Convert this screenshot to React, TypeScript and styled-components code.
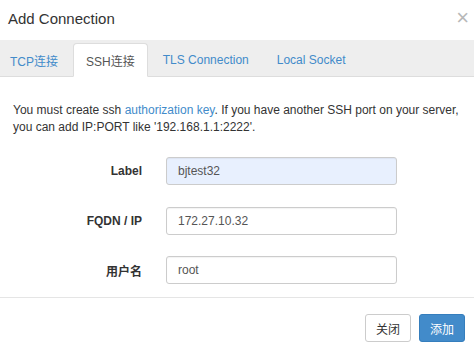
import React from 'react';
import styled, { createGlobalStyle } from 'styled-components';

const GlobalStyle = createGlobalStyle`
  html, body {
    margin: 0;
    padding: 0;
    background: #fff;
  }
  body {
    font-family: "Liberation Sans", Arial, "Noto Sans CJK SC", sans-serif;
    font-size: 12px;
    color: #333;
  }
`;

const Modal = styled.div`
  width: 474px;
  height: 351px;
  display: flex;
  flex-direction: column;
  background: #fff;
  overflow: hidden;
`;

const Header = styled.div`
  height: 40px;
  display: flex;
  align-items: center;
  justify-content: space-between;
  padding: 0 5px 4px 8px;
  box-sizing: border-box;
`;

const Title = styled.h4`
  margin: 0;
  font-size: 15px;
  font-weight: normal;
  color: #333;
`;

const Close = styled.span`
  font-size: 22px;
  font-weight: normal;
  color: #b8b8b8;
  line-height: 1;
`;

const TabBar = styled.ul`
  list-style: none;
  margin: 0;
  padding: 3px 0 0 0;
  height: 37px;
  box-sizing: border-box;
  display: flex;
  background: #eee;
  border-bottom: 1px solid #ddd;
`;

const Tab = styled.li<{ $active?: boolean }>`
  display: flex;
  align-items: center;
  padding: 0 12px;
  margin-right: 2px;
  height: 34px;
  box-sizing: border-box;
  font-size: 12px;
  color: ${p => (p.$active ? '#555' : '#428bca')};
  background: ${p => (p.$active ? '#fff' : 'transparent')};
  border: 1px solid ${p => (p.$active ? '#ddd' : 'transparent')};
  border-bottom-color: transparent;
  border-radius: 4px 4px 0 0;
  margin-bottom: -1px;
  &:first-child {
    padding-left: 10px;
    border-left: none;
  }
`;

const Body = styled.div`
  flex: 1;
  padding: 25px 13px 0 13px;
  border-bottom: 1px solid #e5e5e5;
`;

const Intro = styled.p`
  margin: 0 0 21px 0;
  line-height: 17px;
  font-size: 12px;
  color: #333;
`;

const Link = styled.a`
  color: #428bca;
  text-decoration: none;
`;

const Form = styled.div`
  display: flex;
  flex-direction: column;
  gap: 21.5px;
`;

const Row = styled.div`
  display: flex;
  align-items: center;
`;

const FieldLabel = styled.label`
  width: 129px;
  text-align: right;
  font-weight: bold;
  font-size: 12px;
  color: #333;
  margin-right: 24px;
`;

const Input = styled.input<{ $filled?: boolean }>`
  width: 231px;
  height: 28px;
  box-sizing: border-box;
  padding: 0 11px;
  border: 1px solid #ccc;
  border-radius: 3px;
  font-family: "Liberation Sans", Arial, sans-serif;
  font-size: 12px;
  color: #555;
  background: ${p => (p.$filled ? '#e8f0fe' : '#fff')};
  box-shadow: inset 0 1px 1px rgba(0, 0, 0, 0.05);
  outline: none;
`;

const Footer = styled.div`
  height: 53px;
  display: flex;
  align-items: flex-start;
  justify-content: flex-end;
  gap: 8px;
  padding: 16px 9px 0 0;
  box-sizing: border-box;
`;

const Button = styled.button<{ $primary?: boolean }>`
  height: 28px;
  padding: 0 10px;
  border-radius: 3px;
  font-family: "Liberation Sans", Arial, "Noto Sans CJK SC", sans-serif;
  font-size: 12px;
  border: 1px solid ${p => (p.$primary ? '#357ebd' : '#ccc')};
  background: ${p => (p.$primary ? '#428bca' : '#fff')};
  color: ${p => (p.$primary ? '#fff' : '#333')};
`;

export default function App() {
  return (
    <>
      <GlobalStyle />
      <Modal>
        <Header>
          <Title>Add Connection</Title>
          <Close>×</Close>
        </Header>
        <TabBar>
          <Tab>TCP连接</Tab>
          <Tab $active>SSH连接</Tab>
          <Tab>TLS Connection</Tab>
          <Tab>Local Socket</Tab>
        </TabBar>
        <Body>
          <Intro>
            You must create ssh <Link href="#">authorization key</Link>. If you have another SSH port on your server,
            you can add IP:PORT like '192.168.1.1:2222'.
          </Intro>
          <Form>
            <Row>
              <FieldLabel>Label</FieldLabel>
              <Input $filled defaultValue="bjtest32" />
            </Row>
            <Row>
              <FieldLabel>FQDN / IP</FieldLabel>
              <Input defaultValue="172.27.10.32" />
            </Row>
            <Row>
              <FieldLabel>用户名</FieldLabel>
              <Input defaultValue="root" />
            </Row>
          </Form>
        </Body>
        <Footer>
          <Button>关闭</Button>
          <Button $primary>添加</Button>
        </Footer>
      </Modal>
    </>
  );
}
